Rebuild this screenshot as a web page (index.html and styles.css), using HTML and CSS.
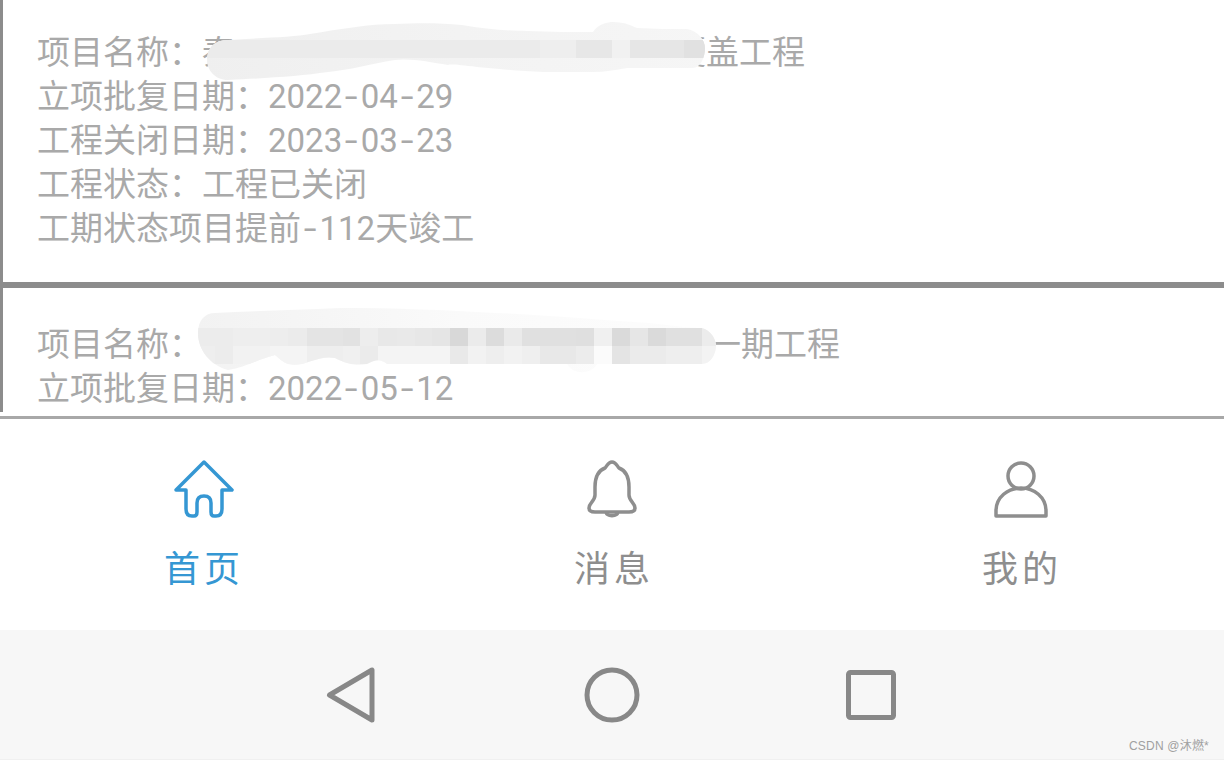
FILE: index.html
```html
<!DOCTYPE html>
<html lang="zh-CN">
  <head>
    <meta charset="UTF-8" />
    <title>工程列表</title>
    <link rel="stylesheet" href="styles.css">
  </head>
  <body>
    <div class="app">
      <div class="list">
        <div class="card">
          <p>项目名称&#65306;秦<span class="hidden-name name-one"></span>覆盖工程</p>
          <p>立项批复日期&#65306;2022<span class="dash">-</span>04<span class="dash">-</span>29</p>
          <p>工程关闭日期&#65306;2023<span class="dash">-</span>03<span class="dash">-</span>23</p>
          <p>工程状态&#65306;工程已关闭</p>
          <p>工期状态项目提前<span class="dash">-</span>112天竣工</p>
        </div>
        <div class="card">
          <p>项目名称&#65306;<span class="hidden-name name-two"></span>一期工程</p>
          <p>立项批复日期&#65306;2022<span class="dash">-</span>05<span class="dash">-</span>12</p>
        </div>
        <!-- smudges painted over the project names -->
        <svg class="smudge smudge-one" width="520" height="70" viewBox="0 0 520 70">
          <defs>
            <clipPath id="clip-one">
              <path d="M7 40C7 28 14 20 28 20C60 18 95 17 110 14C140 9 170 4 195 4C220 3 240 3 262 5C285 9 310 11 327 11C350 12 375 12 393 12C398 4 408 2 413 2C425 2 432 6 437 8C455 9 470 9 487 9C498 11 505 20 505 28C505 38 500 48 493 48C470 48 445 48 427 48C415 50 405 52 393 52C375 52 360 52 343 52C320 51 300 49 277 47C260 45 250 44 248 45C230 42 210 38 195 40C170 44 150 50 128 52C100 56 70 58 28 60C15 60 7 50 7 40Z"/>
            </clipPath>
            <linearGradient id="fade-one">
              <stop offset="0" stop-color="#efefef"/>
              <stop offset="0.5" stop-color="#f3f3f3"/>
              <stop offset="1" stop-color="#f6f6f6"/>
            </linearGradient>
          </defs>
          <g clip-path="url(#clip-one)">
            <rect width="520" height="70" fill="url(#fade-one)"/>
            <rect y="20" width="520" height="18" fill="#ebebeb"/>
            <rect x="340" y="20" width="36" height="18" fill="#eeeeee"/>
            <rect x="376" y="20" width="36" height="18" fill="#e7e7e7"/>
            <rect x="412" y="20" width="18" height="18" fill="#f1f1f1"/>
            <rect x="430" y="20" width="54" height="18" fill="#e6e6e6"/>
            <rect x="484" y="20" width="21" height="18" fill="#e1e1e1"/>
          </g>
        </svg>
        <svg class="smudge smudge-two" width="530" height="75" viewBox="0 0 530 75">
          <defs>
            <clipPath id="clip-two">
              <path d="M3 28C3 15 10 8 20 8C60 6 100 5 145 3C200 3 250 5 300 8C340 9 390 14 440 17C470 19 490 23 507 23C515 25 521 33 521 41C521 50 515 59 507 59H402C396 70 378 70 372 59H192C185 53 180 55 172 59C162 62 150 58 140 53C125 50 110 60 100 60C90 60 85 54 80 50C60 55 50 63 33 65C15 60 3 45 3 28Z"/>
            </clipPath>
            <linearGradient id="fade-two">
              <stop offset="0" stop-color="#f2f2f2"/>
              <stop offset="0.5" stop-color="#fafafa"/>
              <stop offset="1" stop-color="#fdfdfd"/>
            </linearGradient>
          </defs>
          <g clip-path="url(#clip-two)">
            <rect width="530" height="75" fill="url(#fade-two)"/>
            <rect x="0" y="23" width="38" height="18" fill="#ececec"/>
            <rect x="38" y="23" width="37" height="18" fill="#eeeeee"/>
            <rect x="75" y="23" width="18" height="18" fill="#ededed"/>
            <rect x="93" y="23" width="19" height="18" fill="#ebebeb"/>
            <rect x="112" y="23" width="36" height="18" fill="#e4e4e4"/>
            <rect x="148" y="23" width="17" height="18" fill="#e2e2e2"/>
            <rect x="165" y="23" width="18" height="18" fill="#ededed"/>
            <rect x="183" y="23" width="19" height="18" fill="#e8e8e8"/>
            <rect x="202" y="23" width="18" height="18" fill="#e9e9e9"/>
            <rect x="220" y="23" width="17" height="18" fill="#e7e7e7"/>
            <rect x="237" y="23" width="18" height="18" fill="#e5e5e5"/>
            <rect x="255" y="23" width="18" height="18" fill="#d8d8d8"/>
            <rect x="273" y="23" width="18" height="18" fill="#ebebeb"/>
            <rect x="291" y="23" width="18" height="18" fill="#dcdcdc"/>
            <rect x="309" y="23" width="18" height="18" fill="#eaeaea"/>
            <rect x="327" y="23" width="54" height="18" fill="#e0e0e0"/>
            <rect x="381" y="23" width="18" height="18" fill="#dfdfdf"/>
            <rect x="399" y="23" width="18" height="18" fill="#f0f0f0"/>
            <rect x="417" y="23" width="18" height="18" fill="#dadada"/>
            <rect x="435" y="23" width="18" height="18" fill="#e6e6e6"/>
            <rect x="453" y="23" width="18" height="18" fill="#dadada"/>
            <rect x="471" y="23" width="36" height="18" fill="#e0e0e0"/>
            <rect x="507" y="23" width="23" height="18" fill="#ececec"/>

            <rect x="0" y="41" width="20" height="18" fill="#eeeeee"/>
            <rect x="20" y="41" width="18" height="18" fill="#ececec"/>
            <rect x="38" y="41" width="37" height="18" fill="#f2f2f2"/>
            <rect x="75" y="41" width="37" height="18" fill="#f4f4f4"/>
            <rect x="112" y="41" width="36" height="18" fill="#eeeeee"/>
            <rect x="148" y="41" width="17" height="18" fill="#f0f0f0"/>
            <rect x="165" y="41" width="18" height="18" fill="#ebebeb"/>
            <rect x="183" y="41" width="72" height="18" fill="#f4f4f4"/>
            <rect x="255" y="41" width="18" height="18" fill="#e9e9e9"/>
            <rect x="273" y="41" width="18" height="18" fill="#f2f2f2"/>
            <rect x="291" y="41" width="18" height="18" fill="#eeeeee"/>
            <rect x="309" y="41" width="18" height="18" fill="#f2f2f2"/>
            <rect x="327" y="41" width="18" height="18" fill="#efefef"/>
            <rect x="345" y="41" width="36" height="18" fill="#e8e8e8"/>
            <rect x="381" y="41" width="18" height="18" fill="#ececec"/>
            <rect x="399" y="41" width="18" height="18" fill="#fbfbfb"/>
            <rect x="417" y="41" width="18" height="18" fill="#e4e4e4"/>
            <rect x="435" y="41" width="36" height="18" fill="#ebebeb"/>
            <rect x="471" y="41" width="36" height="18" fill="#eeeeee"/>
            <rect x="507" y="41" width="23" height="18" fill="#f3f3f3"/>
          </g>
        </svg>
      </div>
      <div class="tabs">
        <div class="tab active">
          <svg class="tab-icon" width="62" height="60" viewBox="0 0 62 60">
            <path d="M3 31L31 3L59 31H49V50Q49 57 43 57H41Q38 57 38 53V44Q38 37 31 37Q24 37 24 44V53Q24 57 21 57H19Q13 57 13 50V31Z"/>
          </svg>
          <span class="tab-label">首页</span>
        </div>
        <div class="tab">
          <svg class="tab-icon" width="62" height="60" viewBox="0 0 62 60">
            <path d="M31 3C27 3 26 7 24 9C16 12 14 20 14 28V36C14 42 8 44 8 49C8 52 11 53 14 53H48C51 53 54 52 54 49C54 44 48 42 48 36V28C48 20 46 12 38 9C36 7 35 3 31 3Z"/>
            <path d="M25 53C26 58 36 58 37 53"/>
          </svg>
          <span class="tab-label">消息</span>
        </div>
        <div class="tab">
          <svg class="tab-icon" width="62" height="60" viewBox="0 0 62 60">
            <circle cx="32" cy="17" r="13"/>
            <path d="M7 57V52C7 38 19 29 32 29C45 29 57 38 57 52V57Z"/>
          </svg>
          <span class="tab-label">我的</span>
        </div>
      </div>
      <div class="nav">
        <svg class="nav-icon" width="50" height="60" viewBox="0 0 50 60">
          <path d="M1.500 30L44 5V55Z"/>
        </svg>
        <svg class="nav-icon" width="56" height="60" viewBox="0 0 56 60">
          <circle cx="28" cy="30" r="25"/>
        </svg>
        <svg class="nav-icon" width="50" height="60" viewBox="0 0 50 60">
          <rect x="2.500" y="7.500" width="45" height="45" rx="2"/>
        </svg>
        <span class="watermark">CSDN @沐燃*</span>
      </div>
    </div>
  </body>
</html>
```

FILE: styles.css
```css
* {
  margin: 0;
  padding: 0;
  box-sizing: border-box;
}

body {
  background: #ffffff;
  font-family: Roboto, "Noto Sans CJK SC", sans-serif;
}

.app {
  width: 1224px;
  height: 760px;
  display: flex;
  flex-direction: column;
  overflow: hidden;
}

.list {
  position: relative;
  height: 412px;
  overflow: hidden;
  border-left: 3px solid #8c8c8c;
}

.card {
  padding: 35px 34px 31px;
  border-bottom: 6px solid #8c8c8c;
  font-size: 33px;
  line-height: 44px;
  color: #a9a9a9;
}

.card:first-child {
  padding-top: 31px;
}

.dash {
  display: inline-block;
  width: 18.5px;
  text-align: center;
  transform: scaleX(1.4);
}

.hidden-name {
  display: inline-block;
}

.name-one {
  width: 438px;
}

.name-two {
  width: 506px;
}

.smudge {
  position: absolute;
}

.smudge-one {
  left: 197px;
  top: 20px;
}

.smudge-two {
  left: 192px;
  top: 305px;
}

.tabs {
  display: flex;
  height: 214px;
  margin-top: 4px;
  border-top: 3px solid #a8a8a8;
  background: #ffffff;
}

.tab {
  flex: 1;
  display: flex;
  flex-direction: column;
  align-items: center;
  padding-top: 40px;
  color: #8e8e8e;
}

.tab.active {
  color: #3597d3;
}

.tab-icon {
  fill: none;
  stroke: currentColor;
  stroke-width: 3.5;
  stroke-linejoin: round;
}

.tab-label {
  margin-top: 29px;
  font-size: 36px;
  line-height: 44px;
  letter-spacing: 4px;
  padding-left: 4px;
}

.tab.active .tab-label {
  margin-right: 4px;
}

.nav {
  position: relative;
  flex: 1;
  display: flex;
  justify-content: center;
  align-items: center;
  gap: 206px;
  background: #f7f7f7;
  border-bottom: 1px solid #f0f0f0;
}

.nav-icon {
  fill: none;
  stroke: #888888;
  stroke-width: 5;
  stroke-linejoin: round;
  overflow: visible;
}

.watermark {
  position: absolute;
  right: 15px;
  bottom: 6px;
  font-family: "Liberation Sans", "Noto Sans CJK SC", sans-serif;
  font-size: 12px;
  letter-spacing: 0.2px;
  color: #a0a0a0;
}
```
